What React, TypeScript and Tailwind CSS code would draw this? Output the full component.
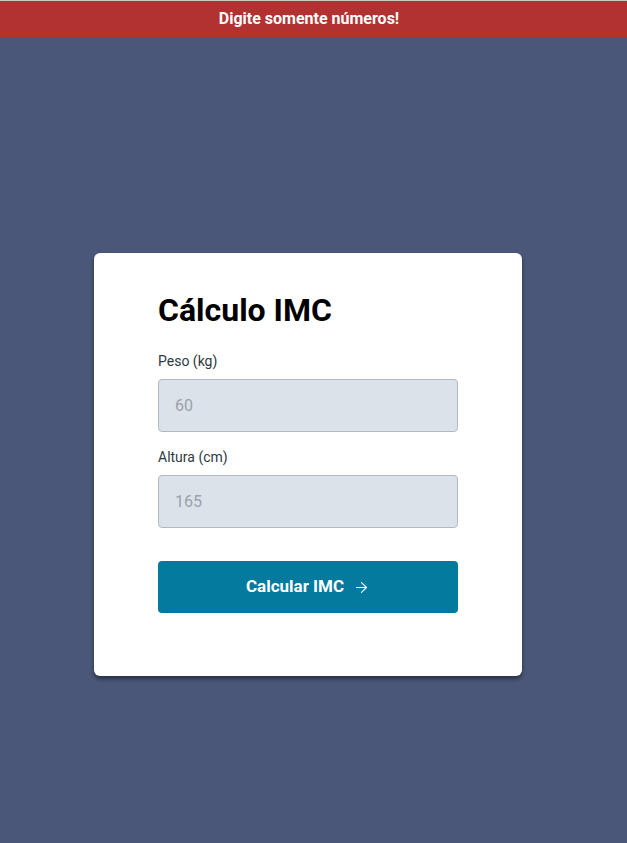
import { ArrowRight } from "lucide-react";

export default function App() {
  return (
    <div className="min-h-[843px] bg-[#4a5778] flex flex-col" style={{ fontFamily: "Roboto, 'Liberation Sans', sans-serif" }}>
      <div className="h-[37px] bg-[#b23131] border-t-[1px] border-[#c9c9c9] flex items-center justify-center pr-[9px]">
        <span className="text-white font-bold text-[16px]">Digite somente números!</span>
      </div>
      <div className="flex justify-center pt-[216px] pr-[11px]">
        <div className="w-[428px] h-[423px] bg-white rounded-[6px] shadow-[0_3px_4px_rgba(0,0,0,0.45)] px-[64px] pt-[38px]">
          <h1 className="text-[32px] font-bold text-black leading-[38px]">Cálculo IMC</h1>
          <form className="mt-[22px] flex flex-col" onSubmit={(e) => e.preventDefault()}>
            <label className="text-[14px] text-[#2d3a42] leading-[20px]">Peso (kg)</label>
            <input
              className="mt-[8px] h-[53px] w-full rounded-[4px] bg-[#dce2ea] border border-[#b3b9c2] px-[16px] text-[16px] placeholder:text-[#9aa1ab] outline-none"
              placeholder="60"
            />
            <label className="mt-[15px] text-[14px] text-[#2d3a42] leading-[20px]">Altura (cm)</label>
            <input
              className="mt-[8px] h-[53px] w-full rounded-[4px] bg-[#dce2ea] border border-[#b3b9c2] px-[16px] text-[16px] placeholder:text-[#9aa1ab] outline-none"
              placeholder="165"
            />
            <button
              type="submit"
              className="mt-[33px] h-[52px] w-full rounded-[4px] bg-[#037a9e] text-white font-bold text-[17px] flex items-center justify-center gap-[9px]"
            >
              Calcular IMC
              <ArrowRight size={17} strokeWidth={1.6} />
            </button>
          </form>
        </div>
      </div>
    </div>
  );
}
